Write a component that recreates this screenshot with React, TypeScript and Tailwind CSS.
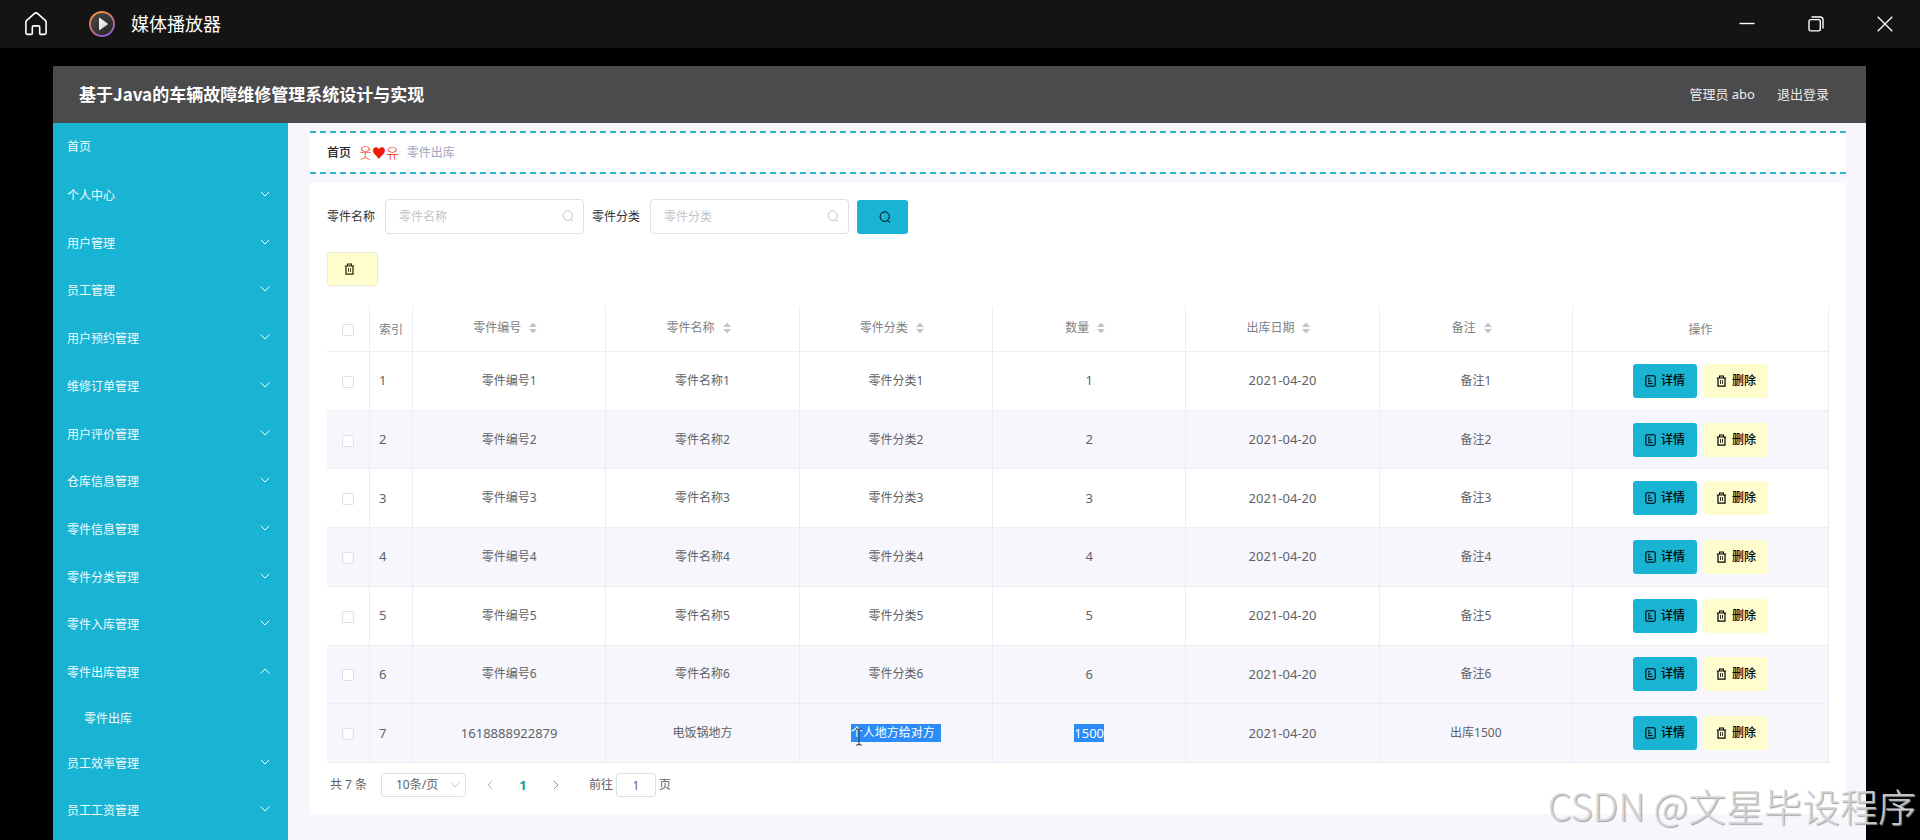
import type { ReactNode } from 'react'

interface Part {
  code: string
  name: string
  category: string
  count: string
  date: string
  note: string
  selected?: boolean
}

const PARTS: Part[] = [
  ...[1, 2, 3, 4, 5, 6].map(n => ({
    code: `零件编号${n}`,
    name: `零件名称${n}`,
    category: `零件分类${n}`,
    count: String(n),
    date: '2021-04-20',
    note: `备注${n}`,
  })),
  {
    code: '1618888922879',
    name: '电饭锅地方',
    category: '个人地方给对方',
    count: '1500',
    date: '2021-04-20',
    note: '出库1500',
    selected: true,
  },
]

const COLUMNS = ['零件编号', '零件名称', '零件分类', '数量', '出库日期', '备注']

const MENU = [
  '个人中心', '用户管理', '员工管理', '用户预约管理', '维修订单管理', '用户评价管理',
  '仓库信息管理', '零件信息管理', '零件分类管理', '零件入库管理', '零件出库管理',
]

const MENU_BOTTOM = ['员工效率管理', '员工工资管理']

function Chevron({ d, className }: { d: string; className?: string }) {
  return (
    <svg viewBox="0 0 10 10" className={className} fill="none" stroke="currentColor" strokeWidth="1">
      <path d={d} strokeLinecap="round" strokeLinejoin="round" />
    </svg>
  )
}

const DOWN  = 'M1 3l4 4 4-4'
const UP    = 'M1 7l4-4 4 4'
const LEFT  = 'M7 1L3 5l4 4'
const RIGHT = 'M3 1l4 4-4 4'

function SearchIcon({ className }: { className?: string }) {
  return (
    <svg viewBox="0 0 12 12" className={className} fill="none" stroke="currentColor" strokeWidth="1">
      <ellipse cx="5.7" cy="5.6" rx="4.6" ry="4.8" />
      <path d="M8.6 9.8l2.2 1.2" strokeLinecap="round" />
    </svg>
  )
}

function TrashIcon({ className }: { className?: string }) {
  return (
    <svg viewBox="0 0 11 12" className={className} fill="none" stroke="currentColor">
      <path d="M0.8 3h9.4M3.6 2.8V1h3.8v1.8M2 3.2v7.9h7V3.2" strokeWidth="1.2" />
      <path d="M4.5 5v4M6.5 5v4" strokeWidth="0.8" />
    </svg>
  )
}

function DetailIcon({ className }: { className?: string }) {
  return (
    <svg viewBox="0 0 11 12" className={className} fill="none" stroke="currentColor">
      <rect x="0.8" y="0.8" width="9.4" height="10.4" rx="1.4" strokeWidth="1.1" />
      <path d="M3.2 3.4h2M3.6 6h3M3.2 8.6h4.4" strokeWidth="1" />
      <path d="M3.6 3.4v5" strokeWidth="0.6" />
    </svg>
  )
}

function SortIcon() {
  return (
    <svg viewBox="0 0 8 12" className="mx-2 h-3 w-2" fill="#c0c4cc">
      <path d="M4 0.5L8 5H0zM4 11.5L0 7h8z" />
    </svg>
  )
}

function MenuItem({ label, open }: { label: string; open?: boolean }) {
  return (
    <li className="flex flex-1">
      <button className="flex flex-1 items-center justify-between pr-[18px] pl-[14px]">
        <span>{label}</span>
        <Chevron d={open ? UP : DOWN} className="mb-1 size-[10px]" />
      </button>
    </li>
  )
}

function SearchField({ id, label }: { id: string; label: string }) {
  return (
    <div className="flex items-center gap-[9px]">
      <label htmlFor={id} className="w-[49px] text-[#303133]">{label}</label>
      <div className="relative">
        <input
          id={id}
          placeholder={label}
          className="h-[35px] w-[199px] rounded-[4px] border border-[#dfe0e6] bg-white pr-8 pl-[13px] placeholder:text-[#c0c4cc]"
        />
        <SearchIcon className="absolute top-[11px] right-[10px] size-3 text-[#c0c4cc]" />
      </div>
    </div>
  )
}

function Cell({ children, className = 'text-center' }: { children: ReactNode; className?: string }) {
  return <td className={`border-r border-b border-[#ebecf4] ${className}`}>{children}</td>
}

function Marked({ on, children }: { on?: boolean; children: string }) {
  const digits = /^[\d-]+$/.test(children)
  return (
    <span className={`${digits ? 'text-[13px]' : ''} ${on ? 'inline-block h-[18px] bg-[#2b8cf7] leading-[18px] text-white' : ''} ${on && !digits ? 'pr-1.5' : ''}`}>
      {children}
    </span>
  )
}

const CHECKBOX = 'block size-3 appearance-none rounded-[2px] border border-[#dcdfe6] bg-white'

export default function App() {
  return (
    <div className="relative flex h-screen flex-col overflow-hidden bg-black font-['Noto_Sans','Noto_Sans_CJK_SC',sans-serif] text-[12px] leading-[18px]">

      {/* Window bar */}
      <div className="flex h-12 shrink-0 items-center bg-[#141414] pr-px text-white">
        <button aria-label="主页" className="ml-6">
          <svg viewBox="0 0 24 24" className="size-6" fill="none" stroke="currentColor" strokeWidth="1.6" strokeLinejoin="round">
            <path d="M1.9 10.2c0-.7.3-1.3.8-1.8l7.6-6.8c1-.9 2.4-.9 3.4 0l7.6 6.8c.5.5.8 1.1.8 1.8v10.6c0 .9-.7 1.6-1.6 1.6h-3.6c-.7 0-1.2-.5-1.2-1.2v-5.7c0-.9-.7-1.6-1.6-1.6h-4.2c-.9 0-1.6.7-1.6 1.6v5.7c0 .7-.5 1.2-1.2 1.2H3.5c-.9 0-1.6-.7-1.6-1.6z" />
          </svg>
        </button>
        <svg viewBox="0 0 26 26" className="ml-[41px] size-[26px]">
          <defs>
            <linearGradient id="ring" x1="0.2" y1="0" x2="0.7" y2="1">
              <stop offset="0" stopColor="#ff9238" />
              <stop offset="0.5" stopColor="#c9707f" />
              <stop offset="1" stopColor="#8a5cd0" />
            </linearGradient>
            <linearGradient id="disc" x1="0" y1="0" x2="1" y2="1">
              <stop offset="0" stopColor="#4a4a4a" />
              <stop offset="1" stopColor="#222222" />
            </linearGradient>
            <linearGradient id="play" x1="0" y1="0" x2="1" y2="1">
              <stop offset="0" stopColor="#ffffff" />
              <stop offset="1" stopColor="#c8c8c8" />
            </linearGradient>
          </defs>
          <circle cx="13" cy="13" r="12" fill="url(#disc)" stroke="url(#ring)" strokeWidth="1.9" />
          <path d="M10 7.4v11.2c0 .5.5.7.9.4l7.8-5.5c.4-.3.4-.7 0-1L10.9 7c-.4-.3-.9-.1-.9.4z" fill="url(#play)" />
        </svg>
        <span className="ml-4 flex-1 text-[18px] leading-6">媒体播放器</span>
        <button aria-label="最小化" className="flex h-12 w-[69px] items-center justify-center">
          <svg viewBox="0 0 16 16" className="size-4" fill="none" stroke="currentColor" strokeWidth="1.4"><path d="M0.5 7.5h15" /></svg>
        </button>
        <button aria-label="还原" className="flex h-12 w-[69px] items-center justify-center">
          <svg viewBox="0 0 16 16" className="size-4" fill="none" stroke="currentColor" strokeWidth="1.4">
            <rect x="1" y="3.6" width="11.3" height="11.3" rx="1.8" />
            <path d="M4 1h8c1.7 0 3 1.3 3 3v8" strokeLinecap="round" />
          </svg>
        </button>
        <button aria-label="关闭" className="flex h-12 w-[69px] items-center justify-center">
          <svg viewBox="0 0 16 16" className="size-4" fill="none" stroke="currentColor" strokeWidth="1.3"><path d="M0.7 0.7l14.6 14.6M15.3 0.7L0.7 15.3" /></svg>
        </button>
      </div>

      <div className="mt-[18px] mr-[54px] ml-[53px] flex min-h-0 flex-1 flex-col bg-[#f6f6fc]">

        {/* Header */}
        <header className="flex h-[57px] shrink-0 items-center justify-between bg-[#4b4a4c] pr-[37px] pb-0.5 pl-[26px] text-white">
          <h1 className="font-['Noto_Sans_CJK_SC',sans-serif] text-[17px] leading-6 font-bold">基于Java的车辆故障维修管理系统设计与实现</h1>
          <div className="flex gap-[22px] text-[13px] text-[#ececec]">
            <span>管理员 abo</span>
            <a href="#logout">退出登录</a>
          </div>
        </header>

        <div className="flex min-h-0 flex-1">

          {/* Sidebar */}
          <nav className="w-[235px] shrink-0 overflow-hidden bg-[#19b3d3] text-[#f0fcff]">
            <a href="#home" className="flex h-[49px] items-center pb-0.5 pl-[14px]">首页</a>
            <ul className="flex h-[525px] flex-col">
              {MENU.map(label => <MenuItem key={label} label={label} open={label === '零件出库管理'} />)}
            </ul>
            <a href="#outbound" className="flex h-[43px] items-center pl-[31px]">零件出库</a>
            <ul className="flex h-[95px] flex-col">
              {MENU_BOTTOM.map(label => <MenuItem key={label} label={label} />)}
            </ul>
          </nav>

          <main className="min-w-0 flex-1 pt-2 pr-5 pl-[22px]">

            {/* Breadcrumb */}
            <div className="flex h-[43px] items-center gap-2 border-y-2 border-dashed border-[#30b5c8] bg-white pt-px pl-[17px]">
              <a href="#home" className="font-medium text-[#202124]">首页</a>
              <span className="font-['DejaVu_Sans','Noto_Sans_CJK_KR',sans-serif] text-[14px] font-light text-[#f01808]">웃♥유</span>
              <span className="text-[#a0a6bb]">零件出库</span>
            </div>

            <section className="mt-[9px] bg-white px-[17px] pt-4 pb-[17px]">
              <form className="flex items-center gap-2" onSubmit={e => e.preventDefault()}>
                <SearchField id="part-name" label="零件名称" />
                <SearchField id="part-category" label="零件分类" />
                <button aria-label="查询" className="flex h-[34px] w-[51px] items-center justify-center rounded-[3px] bg-[#19b3d3] text-black">
                  <SearchIcon className="ml-1 size-3" />
                </button>
              </form>

              <button aria-label="批量删除" className="mt-[18px] flex h-[34px] w-[51px] items-center rounded-[3px] border border-[#ecebd8] bg-[#fffcce] pl-4 text-[#222200]">
                <TrashIcon className="h-3 w-[11px]" />
              </button>

              {/* Table */}
              <table className="mt-5 h-[457px] w-full table-fixed border-separate border-spacing-0 text-[#606266]">
                <colgroup>
                  <col className="w-[43px]" />
                  <col className="w-[43px]" />
                  {COLUMNS.map(c => <col key={c} />)}
                  <col className="w-[256px]" />
                </colgroup>
                <thead className="text-[#7d7f85]">
                  <tr className="h-[46px]">
                    <th className="border-r border-b border-[#ebecf4] pt-0.5">
                      <input type="checkbox" aria-label="全选" className={`mx-auto ${CHECKBOX}`} />
                    </th>
                    <th className="border-r border-b border-[#ebecf4] pt-0.5 font-normal">索引</th>
                    {COLUMNS.map(c => (
                      <th key={c} className="border-r border-b border-[#ebecf4] pb-0.5 font-normal">
                        <button className="inline-flex items-center">{c}<SortIcon /></button>
                      </th>
                    ))}
                    <th className="border-r border-b border-[#ebecf4] pt-0.5 font-normal">操作</th>
                  </tr>
                </thead>
                <tbody>
                  {PARTS.map((p, i) => (
                    <tr key={p.code} className={i % 2 === 1 || p.selected ? 'bg-[#f6f6fc]' : 'bg-white'}>
                      <Cell className="pt-0.5">
                        <input type="checkbox" aria-label={`选择第${i + 1}行`} className={`mx-auto ${CHECKBOX}`} />
                      </Cell>
                      <Cell className="pb-px pl-[9px] text-[13px]">{i + 1}</Cell>
                      <Cell><Marked>{p.code}</Marked></Cell>
                      <Cell><Marked>{p.name}</Marked></Cell>
                      <Cell>
                        <span className="relative">
                          <Marked on={p.selected}>{p.category}</Marked>
                          {p.selected && (
                            <svg viewBox="0 0 8 18" className="absolute top-1 left-1 h-[18px] w-2" fill="none" stroke="#444444" strokeWidth="1.2">
                              <path d="M1 1h2l1 1 1-1h2M4 2v14M1 17h2l1-1 1 1h2" />
                            </svg>
                          )}
                        </span>
                      </Cell>
                      <Cell><Marked on={p.selected}>{p.count}</Marked></Cell>
                      <Cell><Marked>{p.date}</Marked></Cell>
                      <Cell><Marked>{p.note}</Marked></Cell>
                      <Cell>
                        <div className="flex justify-center gap-[7px] font-medium text-black">
                          <button className="flex h-[34px] w-16 items-center justify-center gap-[5px] rounded-[3px] bg-[#19b3d3]">
                            <DetailIcon className="h-3 w-[11px]" />详情
                          </button>
                          <button className="flex h-[34px] w-16 items-center justify-center gap-[5px] rounded-[3px] bg-[#fffcce]">
                            <TrashIcon className="h-3 w-[11px]" />删除
                          </button>
                        </div>
                      </Cell>
                    </tr>
                  ))}
                </tbody>
              </table>

              {/* Pagination */}
              <div className="mt-[10px] flex h-6 items-center pl-[3px] text-[#606266]">
                <span className="w-[51px]">共 7 条</span>
                <div className="relative">
                  <select aria-label="每页条数" className="h-6 w-[85px] appearance-none rounded-[3px] border border-[#dcdfe6] bg-white pl-[14px]">
                    <option>10条/页</option>
                  </select>
                  <Chevron d={DOWN} className="absolute top-[7px] right-[6px] size-[10px] text-[#c0c4cc]" />
                </div>
                <button aria-label="上一页" className="ml-[19px] text-[#b0b3ba]"><Chevron d={LEFT} className="size-[10px]" /></button>
                <button className="w-14 text-center text-[13px] font-bold text-[#12a68c]">1</button>
                <button aria-label="下一页" className="text-[#909399]"><Chevron d={RIGHT} className="size-[10px]" /></button>
                <label htmlFor="goto-page" className="ml-7">前往</label>
                <input id="goto-page" defaultValue="1" className="mx-[3px] h-6 w-10 rounded-[3px] border border-[#dcdfe6] bg-white text-center" />
                <span>页</span>
              </div>
            </section>
          </main>
        </div>
      </div>

      {/* Watermark */}
      <div className="pointer-events-none absolute right-1 bottom-[9px] font-['Noto_Sans_CJK_SC',sans-serif] text-[38px] leading-[52px] font-light whitespace-nowrap text-[#d8d8da]/90 [text-shadow:1px_1px_1px_#a0a0a0]">
        CSDN @文星毕设程序
      </div>
    </div>
  )
}
